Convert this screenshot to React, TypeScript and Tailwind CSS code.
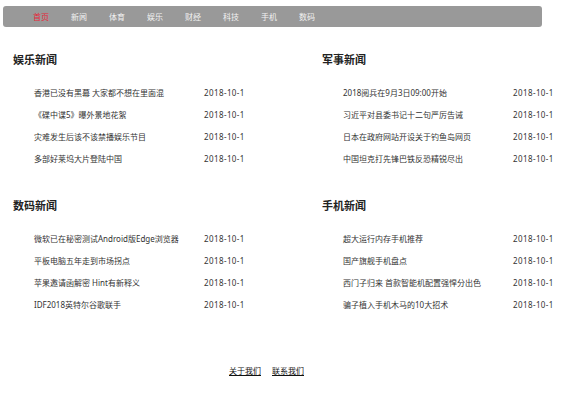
import React from "react"

const navItems = ["首页", "新闻", "体育", "娱乐", "财经", "科技", "手机", "数码"]

type Section = { title: string; items: string[] }

const sections: Section[] = [
  {
    title: "娱乐新闻",
    items: ["香港已没有黑幕 大家都不想在里面混", "《碟中谍5》曝外景地花絮", "灾难发生后该不该禁播娱乐节目", "多部好莱坞大片登陆中国"],
  },
  {
    title: "军事新闻",
    items: ["2018阅兵在9月3日09:00开始", "习近平对县委书记十二句严厉告诫", "日本在政府网站开设关于钓鱼岛网页", "中国坦克打先锋巴铁反恐精锐尽出"],
  },
  {
    title: "数码新闻",
    items: ["微软已在秘密测试Android版Edge浏览器", "平板电脑五年走到市场拐点", "苹果邀请函解密 Hint有新释义", "IDF2018英特尔谷歌联手"],
  },
  {
    title: "手机新闻",
    items: ["超大运行内存手机推荐", "国产旗舰手机盘点", "西门子归来 首款智能机配置强悍分出色", "骗子植入手机木马的10大招术"],
  },
]

function NewsBlock({ section }: { section: Section }) {
  return (
    <div>
      <h2 className="h-[16px] text-[11px] leading-[16px] font-bold text-[#222]">{section.title}</h2>
      <ul className="mt-[14px] pl-[21px]">
        {section.items.map((item) => (
          <li key={item} className="flex h-[22px] items-center text-[8px] text-[#333]">
            <span className="w-[170px] whitespace-nowrap">{item}</span>
            <span className="tracking-[0.4px]">2018-10-1</span>
          </li>
        ))}
      </ul>
    </div>
  )
}

export default function App() {
  return (
    <div
      className="min-h-[396px] w-full bg-white"
      style={{ fontFamily: '"Noto Sans", "Noto Sans CJK SC", sans-serif' }}
    >
      <nav className="ml-[3px] pt-[6px]">
        <div className="flex h-[21px] w-[539px] items-center gap-[22px] rounded-[3px] bg-[#999999] pl-[30px]">
          {navItems.map((item, i) => (
            <a
              key={item}
              href="#"
              className={`text-[8px] leading-[10px] ${i === 0 ? "text-[#e8273a]" : "text-[#f2f2f2]"}`}
            >
              {item}
            </a>
          ))}
        </div>
      </nav>

      <main className="mt-[25px] grid grid-cols-[309px_1fr] gap-y-[28px] pl-[13px]">
        {sections.map((s) => (
          <NewsBlock key={s.title} section={s} />
        ))}
      </main>

      <footer className="mt-[49px] flex gap-[11px] pl-[229px] text-[8px] leading-[12px] text-[#111]">
        <a href="#" className="underline">关于我们</a>
        <a href="#" className="underline">联系我们</a>
      </footer>
    </div>
  )
}
